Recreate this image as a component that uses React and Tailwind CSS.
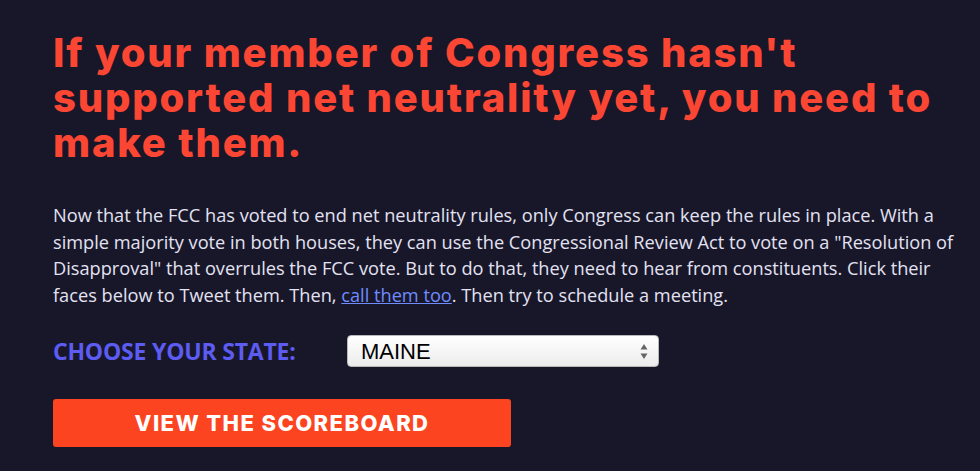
export default function App() {
  return (
    <div className="min-h-[471px] w-[980px] bg-[#181729] px-[53px] pt-[30px] font-['Open_Sans',sans-serif]">
      {/* headline */}
      <h1 className="w-[900px] text-[40px] font-extrabold leading-[45px] tracking-[1.8px] text-[#fc4634] font-['Inter',sans-serif]">
        If your member of Congress hasn't supported net neutrality yet, you need to make them.
      </h1>

      {/* explainer copy */}
      <p className="mt-[37px] w-[915px] text-[18.2px] leading-[26.5px] text-[#e3e2f3]">
        Now that the FCC has voted to end net neutrality rules, only Congress can keep the rules in place. With a
        simple majority vote in both houses, they can use the Congressional Review Act to vote on a "Resolution of
        Disapproval" that overrules the FCC vote. But to do that, they need to hear from constituents. Click their
        faces below to Tweet them. Then, <a href="#" className="text-[#6f8cff] underline">call them too</a>. Then try
        to schedule a meeting.
      </p>

      {/* state picker */}
      <div className="mt-[27px] flex items-center">
        <label className="w-[294px] text-[23px] font-bold leading-[32px] tracking-[-0.2px] text-[#5d5cf2]">
          CHOOSE YOUR STATE:
        </label>
        <div className="relative flex h-[32px] w-[312px] items-center rounded-[4px] border border-[#b8b8b8] bg-gradient-to-b from-white to-[#ececec] pl-[13px] font-['Liberation_Sans',sans-serif] text-[22px] text-black">
          MAINE
          <svg className="absolute right-[10px] top-[7px]" width="8" height="17" viewBox="0 0 8 17">
            <path d="M4 1 L7.5 6.5 H0.5 Z" fill="#666" />
            <path d="M4 16 L7.5 10.5 H0.5 Z" fill="#666" />
          </svg>
        </div>
      </div>

      {/* scoreboard button */}
      <button className="mt-[32px] flex h-[48px] w-[458px] items-center justify-center rounded-[3px] bg-[#fc4420] text-[22px] font-extrabold tracking-[1.4px] text-white font-['Inter',sans-serif]">
        VIEW THE SCOREBOARD
      </button>
    </div>
  );
}
